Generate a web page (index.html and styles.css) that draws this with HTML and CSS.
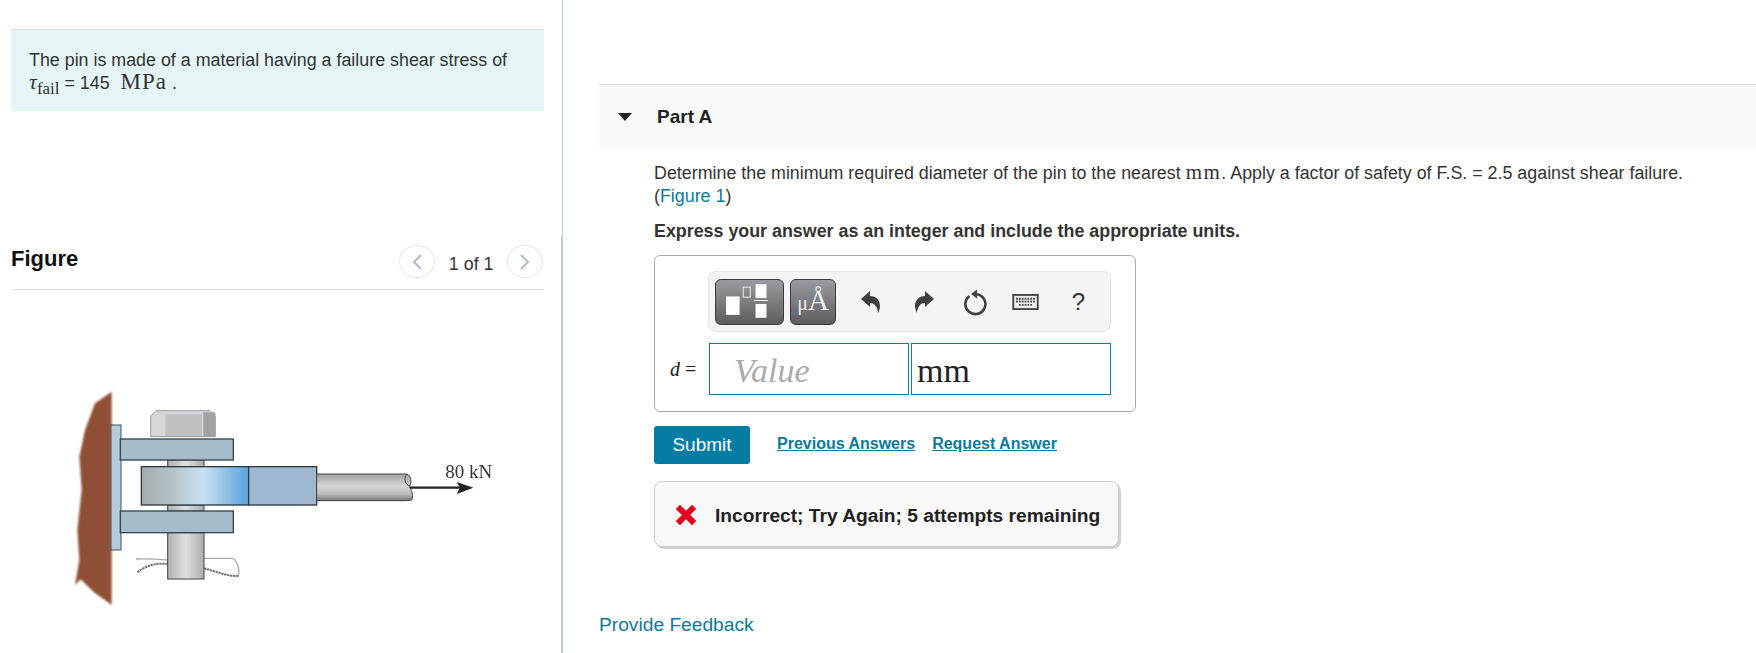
FILE: index.html
```html
<!DOCTYPE html>
<html lang="en">
<head>
<meta charset="utf-8">
<title>Part A</title>
<link rel="stylesheet" href="styles.css">
</head>
<body>
<div class="page">
  <aside class="left">
    <div class="intro">
      <p>The pin is made of a material having a failure shear stress of<br>
      <span class="math"><i>τ</i><sub>fail</sub></span> = 145 <span class="math unit">MPa</span> .</p>
    </div>
    <div class="fig-head">
      <h2>Figure</h2>
      <div class="pager">
        <span class="circle"><svg viewBox="0 0 14 20" width="14" height="20"><path class="chev" d="M11 3 4 10l7 7"/></svg></span>
        <span class="count">1 of 1</span>
        <span class="circle"><svg viewBox="0 0 14 20" width="14" height="20"><path class="chev" d="M3 3l7 7-7 7"/></svg></span>
      </div>
    </div>
    <svg class="figure" viewBox="0 0 1380 720" width="460" height="240">
      <defs>
        <linearGradient id="ring" x1="0" x2="1" y1="0" y2="0">
          <stop offset="0" stop-color="#a4abab"/><stop offset=".3" stop-color="#b6c4c9"/>
          <stop offset=".58" stop-color="#c9e0f4"/><stop offset=".8" stop-color="#90bfe3"/><stop offset="1" stop-color="#55a4dc"/>
        </linearGradient>
        <linearGradient id="shank" x1="0" x2="1" y1="0" y2="0">
          <stop offset="0" stop-color="#b0b0b0"/><stop offset=".5" stop-color="#e0e0e0"/><stop offset="1" stop-color="#adadad"/>
        </linearGradient>
        <linearGradient id="rod" x1="0" x2="0" y1="0" y2="1">
          <stop offset="0" stop-color="#a09e9d"/><stop offset=".45" stop-color="#d8d6d5"/><stop offset=".75" stop-color="#bdbbbb"/><stop offset="1" stop-color="#777"/>
        </linearGradient>
        <filter id="soft"><feGaussianBlur stdDeviation="1.8"/></filter>
        <filter id="softer"><feGaussianBlur stdDeviation="3"/></filter>
      </defs>
      <path class="wall" filter="url(#softer)" d="M155 35 155 675 100 635 62 598 45 615 58 540 52 450 65 330 58 230 75 150 105 70Z"/>
      <g filter="url(#soft)">
        <rect class="plate" x="153" y="135" width="30" height="375"/>
        <path class="bolt" d="M272 108 288 92H450L466 108V170H272Z"/>
        <path class="bolt-hi" d="M316 103H426V168H316Z"/>
        <path class="bolt-dk" d="M430 97H466V170H430Z"/>
        <rect class="shank" x="323" y="240" width="109" height="20"/>
        <rect class="shank" x="323" y="375" width="109" height="18"/>
        <path class="pin" d="M228 537C270 535 300 538 323 540M432 535H515C530 537 540 565 536 587"/>
        <path class="pin-dk" d="M232 577C260 555 290 548 323 552M432 565C470 575 505 590 536 588"/>
        <rect class="shank" x="323" y="458" width="109" height="139"/>
        <rect class="arm" x="181" y="177" width="339" height="63"/>
        <rect class="arm" x="181" y="393" width="339" height="65"/>
        <rect class="ring" x="244" y="260" width="322" height="115"/>
        <rect class="block" x="566" y="260" width="204" height="115"/>
        <path class="rod" d="M770 282H1040C1055 285 1055 310 1048 320 1058 335 1060 350 1055 360L1040 362H770Z"/>
        <path class="rod-end" d="M1040 283C1030 295 1035 315 1050 318"/>
        <path class="shaft" d="M1050 323H1200"/>
        <path class="head" d="M1190 306 1240 323 1190 342 1200 323Z"/>
        <text class="load" x="1156" y="294">80 kN</text>
      </g>
    </svg>
  </aside>

  <main class="right">
    <header class="part-head">
      <span class="tri"></span>
      <h3>Part A</h3>
    </header>
    <section class="part-body">
      <p>Determine the minimum required diameter of the pin to the nearest <span class="math">mm</span>. Apply a factor of safety of F.S. = 2.5 against shear failure.<br>(<a href="#">Figure 1</a>)</p>
      <p class="bold">Express your answer as an integer and include the appropriate units.</p>

      <div class="answer">
        <div class="toolbar">
          <span class="tbtn tbtn-wide">
            <svg viewBox="0 0 69 46" width="69" height="46">
              <rect class="w" x="10.3" y="17.3" width="14" height="19"/>
              <rect class="o" x="28" y="7.7" width="7.3" height="10.3"/>
              <rect class="w" x="40.7" y="4.7" width="11.3" height="14.3"/>
              <rect class="w" x="39" y="21" width="14.3" height="1"/>
              <rect class="w" x="40.7" y="25" width="11.3" height="14.3"/>
            </svg>
          </span>
          <span class="tbtn tbtn-unit"><span class="mu">μ</span><span class="ang">Å</span></span>
          <div class="tools">
            <svg viewBox="0 0 20 22" width="20" height="22"><path class="ic" d="M0 8 9 0V5C15 5 19 9 19 15 19 18 18 20 17 22 17 17 14 12 9 12V16Z"/></svg>
            <svg viewBox="0 0 20 22" width="20" height="22"><path class="ic" d="M20 8 11 0V5C5 5 1 9 1 15 1 18 2 20 3 22 3 17 6 12 11 12V16Z"/></svg>
            <svg viewBox="0 0 26 28" width="26" height="28"><path class="ring-ic" d="M7.500 8A10 10 0 1 0 15 6.200"/><path class="ic" d="M15 1.500 9 6l6 4.500Z"/></svg>
            <svg viewBox="0 0 28 17" width="27" height="16">
              <rect class="kb" x="1" y="1" width="26" height="15"/>
              <path class="kb-k" d="M4 5H24M4 8H24M7 11.500H21"/>
            </svg>
            <span class="help">?</span>
          </div>
        </div>
        <div class="inputs">
          <span class="var"><i>d</i> =</span>
          <div class="field value">Value</div>
          <div class="field units">mm</div>
        </div>
      </div>

      <div class="actions">
        <button class="submit" type="button">Submit</button>
        <a class="act" href="#">Previous Answers</a>
        <a class="act" href="#">Request Answer</a>
      </div>

      <div class="feedback">
        <svg viewBox="0 0 20 20" width="20" height="20"><path class="x" d="M4 4 10 10M16 4 10 10M4 16 10 10M16 16 10 10"/></svg>
        <span>Incorrect; Try Again; 5 attempts remaining</span>
      </div>
    </section>
    <a class="provide" href="#">Provide Feedback</a>
  </main>
</div>
</body>
</html>
```
FILE: styles.css
```css
* { box-sizing: border-box; }
html, body { margin: 0; height: 100%; overflow: hidden; background: #fff; }
body { font-family: "Liberation Sans", Arial, sans-serif; font-size: 17.85px; line-height: 23px; color: #333; }
p { margin: 0; }
a { color: #0b7a9b; text-decoration: none; }
.page { display: flex; height: 653px; }

/* left column */
.left { width: 563px; flex: none; padding: 29px 18px 0 11px; border-right: 1px solid #b9cfe0; position: relative; }
.left::after { content: ""; position: absolute; right: -1px; top: 236px; bottom: 0; width: 2px; background: #b9cfe0; }
.intro { background: #e5f5f6; border-top: 1px solid #dcdcdc; height: 82px; padding: 18.500px 18px 0; }
.intro p { line-height: 22.500px; }
.math { font-family: "Liberation Serif", serif; }
.math i { font-size: 22px; }
.math sub { font-size: 17px; line-height: 0; }
.unit { font-size: 23px; margin-left: 6px; letter-spacing: 1px; }
.fig-head { display: flex; justify-content: space-between; align-items: flex-start; height: 56px; margin-top: 123px; border-bottom: 1px solid #ddd; padding-top: 12px; }
.fig-head h2 { margin: 0; font-size: 22px; line-height: 26px; color: #111; }
.pager { display: flex; align-items: flex-start; gap: 13.500px; padding-right: 1px; margin-top: -1px; }
.circle { width: 36px; height: 33px; border: 1px solid #e6e6e6; border-radius: 50%; display: flex; align-items: center; justify-content: center; }
.chev { fill: none; stroke: #b4bcc6; stroke-width: 2.2; }
.count { margin-top: 8px; }
.figure { display: block; margin: 90px 0 0 49px; }
.wall { fill: #8f4f36; }
.plate { fill: #b4cbdc; stroke: #44525c; stroke-width: 3; }
.arm { fill: #a6bccb; stroke: #36444e; stroke-width: 4; }
.bolt { fill: #d6d7d9; stroke: #777; stroke-width: 2; }
.bolt-hi { fill: #bfc0c3; }
.bolt-dk { fill: #a2a2a5; }
.shank { fill: url(#shank); stroke: #444; stroke-width: 3; }
.ring { fill: url(#ring); stroke: #2e3a42; stroke-width: 4; }
.block { fill: #9db8cf; stroke: #2e3a42; stroke-width: 4; }
.rod { fill: url(#rod); stroke: #444; stroke-width: 3; }
.rod-end { fill: none; stroke: #444; stroke-width: 3; }
.pin { fill: none; stroke: #aaa; stroke-width: 4; }
.pin-dk { fill: none; stroke: #6f6f6f; stroke-width: 6; stroke-dasharray: 7 2; }
.shaft { stroke: #222; stroke-width: 7; }
.head { fill: #222; }
.load { font-family: "Liberation Serif", serif; font-size: 57px; fill: #333; }

/* right column */
.right { flex: 1; padding: 84px 0 0 36px; min-width: 0; }
.part-head { display: flex; align-items: center; height: 64px; background: #f8f8f8; border-top: 1px solid #e2e2e2; padding-left: 19px; }
.tri { width: 0; height: 0; border-left: 7.5px solid transparent; border-right: 7.5px solid transparent; border-top: 8px solid #222; }
.part-head h3 { margin: 0 0 0 25px; font-size: 19px; line-height: 24px; color: #222; }
.part-body { padding: 13px 0 0 55px; }
.part-body .math { font-size: 21px; letter-spacing: 1.5px; }
.bold { font-weight: bold; margin-top: 12px; }

.answer { width: 482px; height: 157px; margin-top: 12px; border: 1px solid #aaa; border-radius: 6px; padding: 15px 24px 0 0; background: #fff; }
.toolbar { display: flex; align-items: center; width: 403px; height: 61px; margin-left: 53px; padding-left: 6px; background: #f4f4f4; border: 1px solid #e3e3e3; border-radius: 8px; }
.tbtn { height: 46px; border: 1px solid #3a3a3a; border-radius: 6px; background: linear-gradient(#9b9aa1, #5d5d5d); display: flex; align-items: center; justify-content: center; color: #eee; font-family: "Liberation Serif", serif; }
.tbtn-wide { width: 69px; }
.tbtn-unit { width: 46px; margin-left: 6px; align-items: baseline; padding-top: 9px; }
.mu { font-size: 20px; }
.ang { font-size: 29px; }
.w { fill: #fff; }
.o { fill: none; stroke: #eee; stroke-width: 1; }
.tools { display: grid; grid-template-columns: 53px 53px 49px 53px 53px; align-items: center; justify-items: center; margin-left: 8px; }
.ic { fill: #3f3f3f; }
.ring-ic { fill: none; stroke: #3f3f3f; stroke-width: 2.6; }
.kb { fill: #eee; stroke: #444; stroke-width: 2; }
.kb-k { stroke: #555; stroke-width: 2; stroke-dasharray: 2 1; fill: none; }
.help { font-size: 24px; color: #333; }
.inputs { display: flex; align-items: center; margin-top: 11px; }
.var { width: 54px; padding-left: 15px; font-family: "Liberation Serif", serif; font-size: 20px; color: #222; white-space: nowrap; }
.field { width: 200px; height: 52px; border: 1px solid #0b7d9b; font-family: "Liberation Serif", serif; font-size: 34px; line-height: 54px; }
.value { color: #aaa; font-style: italic; padding-left: 24px; }
.units { margin-left: 2px; color: #222; padding-left: 5px; }

.actions { display: flex; align-items: flex-start; margin-top: 14px; }
.submit { width: 96px; height: 38px; background: #057ca1; border: 0; border-radius: 3px; color: #fff; font-family: inherit; font-size: 19px; padding: 0; }
.act { font-size: 16px; font-weight: bold; text-decoration: underline; margin-left: 27px; margin-top: 6px; }
.act + .act { margin-left: 17px; }
.feedback { display: flex; align-items: center; width: 465px; height: 66px; margin-top: 17px; padding-left: 21px; background: #f8f8f8; border: 1px solid #ccc; border-radius: 8px; box-shadow: 2px 2px 0 #cfcfcf; font-weight: bold; font-size: 19.2px; color: #222; }
.feedback svg { margin-top: 1px; }
.feedback span { margin-left: 19px; padding-top: 3px; }
.x { stroke: #e2001a; stroke-width: 6; stroke-linecap: square; fill: none; }
.provide { display: block; margin-top: 66px; font-size: 19.2px; line-height: 24px; }
```
